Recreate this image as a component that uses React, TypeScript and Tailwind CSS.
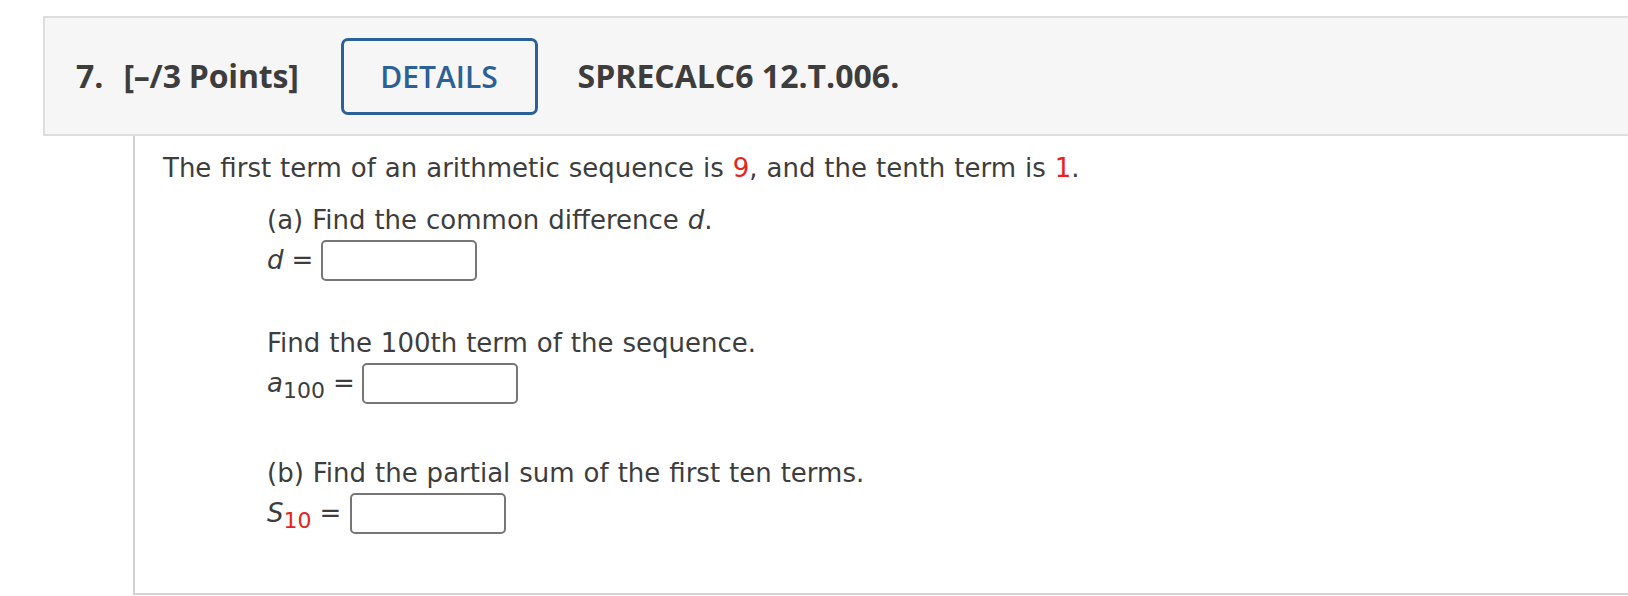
export default function App() {
  const body = { fontFamily: '"DejaVu Sans", Verdana, sans-serif' }
  const head = { fontFamily: '"Open Sans", "Liberation Sans", sans-serif' }

  const Box = () => (
    <span className="inline-block h-[41px] w-[156px] rounded-[5px] border-2 border-[#767676] bg-white align-middle" />
  )

  return (
    <div className="min-h-[596px] bg-white pt-[16px] text-[#3d3d3d]">
      <div
        style={head}
        className="ml-[43px] flex h-[120px] items-center border-2 border-r-0 border-[#dedede] bg-[#f6f6f6] pl-[31px] text-[32px] font-bold"
      >
        <span>7.</span>
        <span className="ml-[20px] tracking-[-0.2px]">[–/3 Points]</span>
        <span className="ml-[42px] flex h-[77px] w-[197px] items-center justify-center rounded-[7px] border-[3px] border-[#2b6196] text-[30px] font-semibold text-[#2b6196]">
          DETAILS
        </span>
        <span className="ml-[40px]">SPRECALC6 12.T.006.</span>
      </div>

      <div
        style={body}
        className="ml-[133px] h-[459px] border-b-2 border-l-2 border-[#d2d2d2] pl-[28px] pt-[12px] text-[26px] [word-spacing:0.7px]"
      >
        <div className="leading-[40px]">
          The first term of an arithmetic sequence is <span className="text-[#e8231a]">9</span>, and the
          tenth term is <span className="text-[#e8231a]">1</span>.
        </div>

        <div className="ml-[104px]">
          <div className="mt-[12px] leading-[40px]">
            (a) Find the common difference <i>d</i>.
          </div>
          <div className="flex h-[41px] items-center">
            <i>d</i>
            <span className="ml-[8px] mr-[8px]">=</span>
            <Box />
          </div>

          <div className="mt-[42px] leading-[40px]">Find the 100th term of the sequence.</div>
          <div className="flex h-[41px] items-center">
            <i>a</i>
            <span className="relative top-[7px] text-[22px]">100</span>
            <span className="ml-[8px] mr-[7px]">=</span>
            <Box />
          </div>

          <div className="mt-[49px] leading-[40px]">(b) Find the partial sum of the first ten terms.</div>
          <div className="flex h-[41px] items-center">
            <i>S</i>
            <span className="relative top-[7px] text-[22px] text-[#e8231a]">10</span>
            <span className="ml-[8px] mr-[9px]">=</span>
            <Box />
          </div>
        </div>
      </div>
    </div>
  )
}
